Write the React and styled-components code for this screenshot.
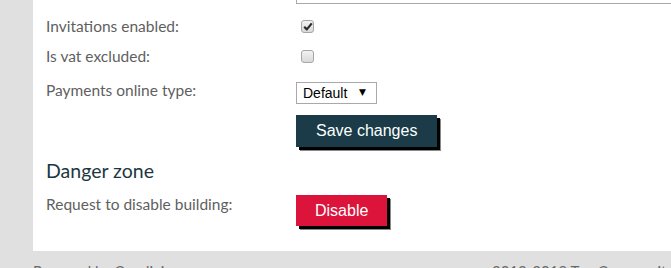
import React from "react";
import styled, { createGlobalStyle } from "styled-components";

const Global = createGlobalStyle`
  html, body {
    margin: 0;
    padding: 0;
    background: #e0e0e0;
    overflow: hidden;
  }
  body {
    font-family: Lato, "Open Sans", sans-serif;
  }
`;

const Page = styled.div`
  width: 780px;
`;

const Panel = styled.section`
  margin: -22px 0 0 33px;
  background: #ffffff;
  padding: 0 0 25px 13px;
`;

const Row = styled.div`
  display: grid;
  grid-template-columns: 250px 1fr;
  align-items: center;
  height: ${(p) => p.$h || 30}px;
  margin-top: ${(p) => p.$mt || 0}px;
`;

const Label = styled.span`
  font-family: Lato, sans-serif;
  font-size: 15.5px;
  color: #5f5f5f;
  line-height: 18px;
  position: relative;
  top: ${(p) => p.$shift || 0}px;
`;

const TextInput = styled.input`
  box-sizing: border-box;
  width: 420px;
  height: 26px;
  border: 1px solid #a9a9a9;
  background: #fff;
  margin: 0;
  padding: 0;
`;

const Box = styled.span`
  box-sizing: border-box;
  display: inline-flex;
  align-items: center;
  justify-content: center;
  width: 13px;
  height: 13px;
  margin-left: 5px;
  border: 1px solid #a6a6a6;
  border-radius: 3px;
  background: linear-gradient(#f2f2f2, #d9d9d9);
`;

const Checkbox = ({ checked }) => (
  <Box>
    {checked && (
      <svg width="10" height="9" viewBox="0 0 10 9">
        <path d="M1.2 4.8 L3.8 7.4 L8.8 1.4" fill="none" stroke="#2b2b2b" strokeWidth="2.2" strokeLinejoin="round" />
      </svg>
    )}
  </Box>
);

const SelectWrap = styled.span`
  position: relative;
  display: inline-block;
  width: 81px;
  height: 22px;
`;

const Select = styled.select`
  appearance: none;
  box-sizing: border-box;
  width: 100%;
  height: 100%;
  margin: 0;
  padding: 0 0 0 6px;
  border: 1px solid #a9a9a9;
  border-radius: 0;
  background: #fff;
  font-family: "Liberation Sans", Arial, sans-serif;
  font-size: 14px;
  color: #000;
`;

const Arrow = styled.span`
  position: absolute;
  right: 11px;
  top: 5px;
  font-family: "DejaVu Sans", sans-serif;
  font-size: 9px;
  color: #000;
  pointer-events: none;
`;

const Button = styled.button`
  justify-self: start;
  height: ${(p) => p.$h}px;
  padding: 0 ${(p) => p.$px}px;
  border: 0;
  border-radius: 0;
  background: ${(p) => p.$bg};
  color: #fff;
  font-family: "Liberation Sans", Arial, sans-serif;
  font-size: 16px;
  box-shadow: 3px 3px 0 #000, 4px 4px 0 #8a8a8a;
  cursor: pointer;
`;

const Heading = styled.h2`
  margin: 12px 0 0;
  font-family: Lato, sans-serif;
  font-weight: 400;
  font-size: 19.5px;
  line-height: 24px;
  color: #1d3741;
`;

const Footer = styled.footer`
  display: grid;
  grid-template-columns: 459px auto;
  padding: 11px 0 0 33px;
  font-family: Lato, sans-serif;
  font-size: 15px;
  line-height: 18px;
  color: #6a6a6a;
  white-space: nowrap;
`;

export default function App() {
  return (
    <Page>
      <Global />
      <Panel>
        <Row $h={26}>
          <span />
          <TextInput type="text" />
        </Row>
        <Row $mt={7}>
          <Label>Invitations enabled:</Label>
          <Checkbox checked />
        </Row>
        <Row>
          <Label>Is vat excluded:</Label>
          <Checkbox />
        </Row>
        <Row $h={22} $mt={11}>
          <Label $shift={-3}>Payments online type:</Label>
          <SelectWrap>
            <Select defaultValue="default">
              <option value="default">Default</option>
            </Select>
            <Arrow>▼</Arrow>
          </SelectWrap>
        </Row>
        <Row $h={32} $mt={11}>
          <span />
          <Button $bg="#1a3b47" $h={32} $px={20}>Save changes</Button>
        </Row>
        <Heading>Danger zone</Heading>
        <Row $h={31} $mt={12}>
          <Label $shift={-7}>Request to disable building:</Label>
          <Button $bg="#dc143c" $h={31} $px={19}>Disable</Button>
        </Row>
      </Panel>
      <Footer>
        <span>Powered by Condivi</span>
        <span>2013-2019 Ten Community</span>
      </Footer>
    </Page>
  );
}
